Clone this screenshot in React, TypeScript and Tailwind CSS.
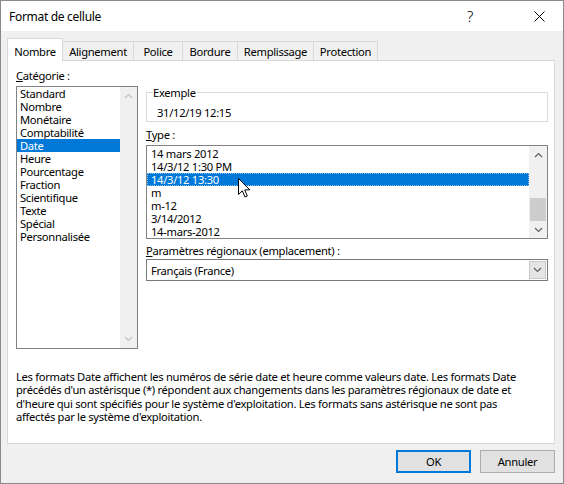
import React from "react";

const categories = [
  "Standard",
  "Nombre",
  "Monétaire",
  "Comptabilité",
  "Date",
  "Heure",
  "Pourcentage",
  "Fraction",
  "Scientifique",
  "Texte",
  "Spécial",
  "Personnalisée",
];

const types = [
  "14 mars 2012",
  "14/3/12 1:30 PM",
  "14/3/12 13:30",
  "m",
  "m-12",
  "3/14/2012",
  "14-mars-2012",
];

const tabs = [
  { label: "Nombre", w: "w-[56px]" },
  { label: "Alignement", w: "w-[72px]" },
  { label: "Police", w: "w-[50px]" },
  { label: "Bordure", w: "w-[56px]" },
  { label: "Remplissage", w: "w-[77px]" },
  { label: "Protection", w: "w-[65px]" },
];

const Chevron = ({ up, color }: { up?: boolean; color: string }) => (
  <svg width="9" height="6" viewBox="0 0 9 6">
    <polyline
      points={up ? "1,5 4.5,1.5 8,5" : "1,1 4.5,4.5 8,1"}
      fill="none"
      stroke={color}
      strokeWidth="1.2"
    />
  </svg>
);

const Cursor = () => (
  <svg width="13" height="20" viewBox="0 0 13 20">
    <path
      d="M0.5 0.5 V16.5 L4.3 12.8 L7 19 L9.3 18 L6.7 11.9 H11.8 Z"
      fill="#fff"
      stroke="#000"
      strokeWidth="1"
      strokeLinejoin="miter"
    />
  </svg>
);

export default function App() {
  return (
    <div className="w-[564px] h-[484px] border border-[#8a8a8a] bg-[#f0f0f0] text-[11.2px] tracking-[-0.3px] leading-[13px] text-black font-['Segoe_UI','Noto_Sans',sans-serif] flex flex-col overflow-hidden">
      {/* title bar */}
      <div className="h-[30px] bg-white flex items-center pl-[8px] shrink-0">
        <span className="flex-1 pt-[1px] text-[12px]">Format de cellule</span>
        <span className="w-[20px] text-center text-[15px] font-light mr-[54px]">?</span>
        <svg width="11" height="11" viewBox="0 0 11 11" className="mr-[18px]">
          <path d="M0.5 0.5 L10.5 10.5 M10.5 0.5 L0.5 10.5" stroke="#000" strokeWidth="1" />
        </svg>
      </div>

      <div className="pl-[6px] pt-[7px] flex flex-col">
        {/* tabs */}
        <div className="flex items-end h-[22px]">
          {tabs.map((t, i) =>
            i === 0 ? (
              <div
                key={t.label}
                className={`${t.w} h-[23px] -mb-px relative z-10 bg-white border border-b-0 border-[#d9d9d9] flex items-center justify-center pt-[2px]`}
              >
                {t.label}
              </div>
            ) : (
              <div
                key={t.label}
                className={`${t.w} h-[19px] -ml-px bg-[#f0f0f0] border border-b-0 border-[#d9d9d9] flex items-center justify-center`}
              >
                {t.label}
              </div>
            )
          )}
        </div>

        {/* panel */}
        <div className="w-[548px] h-[384px] bg-white border border-[#d9d9d9] pl-[8px] pt-[8px] flex flex-col">
          <div className="flex gap-[8px]">
            {/* categories */}
            <div className="w-[122px] flex flex-col">
              <div>
                <span className="underline">C</span>atégorie :
              </div>
              <div className="mt-[4px] h-[263px] border border-[#828282] flex">
                <div className="flex-1 flex flex-col">
                  {categories.map((c) => (
                    <div
                      key={c}
                      className={
                        c === "Date"
                          ? "h-[13px] pl-[3px] bg-[#0078d7] text-white"
                          : "h-[13px] pl-[3px]"
                      }
                    >
                      {c}
                    </div>
                  ))}
                </div>
                <div className="w-[17px] bg-[#f0f0f0] flex flex-col items-center justify-between py-[6px]">
                  <Chevron up color="#c2c2c2" />
                  <Chevron color="#c2c2c2" />
                </div>
              </div>
            </div>

            {/* right side */}
            <div className="w-[402px] pt-[17px] flex flex-col">
              <fieldset className="border border-[#dcdcdc] pl-[5px] pb-[2px]">
                <legend className="px-[1px]">Exemple</legend>
                <div className="pt-[7px] pl-[5px]">31/12/19 12:15</div>
              </fieldset>

              <div className="mt-[6px]">
                <span className="underline">T</span>ype :
              </div>
              <div className="mt-[4px] h-[94px] border border-[#828282] flex relative">
                <div className="flex-1 flex flex-col pt-[1px]">
                  {types.map((t) => (
                    <div
                      key={t}
                      className={
                        t === "14/3/12 13:30"
                          ? "h-[13px] pl-[4px] bg-[#0078d7] text-white outline outline-1 outline-dotted outline-[#8cbcea] -outline-offset-1"
                          : "h-[13px] pl-[4px]"
                      }
                    >
                      {t}
                    </div>
                  ))}
                </div>
                <div className="w-[18px] bg-[#f0f0f0] flex flex-col items-center">
                  <div className="h-[17px] flex items-center justify-center">
                    <Chevron up color="#606060" />
                  </div>
                  <div className="flex-1 w-full flex flex-col justify-end px-px">
                    <div className="h-[23px] bg-[#cdcdcd]" />
                  </div>
                  <div className="h-[17px] w-full flex items-center justify-center">
                    <Chevron color="#606060" />
                  </div>
                </div>
                <div className="absolute left-[91px] top-[32px]">
                  <Cursor />
                </div>
              </div>

              <div className="mt-[5px]">
                <span className="underline">P</span>aramètres régionaux (emplacement) :
              </div>
              <div className="mt-[2px] h-[22px] border border-[#7a7a7a] flex items-center">
                <div className="flex-1 pl-[4px]">Français (France)</div>
                <div className="w-[17px] h-[18px] mr-px bg-[#e5e5e5] border border-[#c8c8c8] flex items-center justify-center">
                  <Chevron color="#606060" />
                </div>
              </div>
            </div>
          </div>

          <p className="mt-[21px] leading-[13.4px] whitespace-nowrap">
            Les formats Date affichent les numéros de série date et heure comme valeurs date. Les formats Date
            <br />
            précédés d'un astérisque (*) répondent aux changements dans les paramètres régionaux de date et
            <br />
            d'heure qui sont spécifiés pour le système d'exploitation. Les formats sans astérisque ne sont pas
            <br />
            affectés par le système d'exploitation.
          </p>
        </div>

        {/* buttons */}
        <div className="w-[548px] mt-[6px] flex justify-end gap-[9px]">
          <button className="w-[75px] h-[23px] bg-[#e1e1e1] border-2 border-[#0078d7] flex items-center justify-center">
            OK
          </button>
          <button className="w-[75px] h-[23px] bg-[#e1e1e1] border border-[#adadad] flex items-center justify-center">
            Annuler
          </button>
        </div>
      </div>
    </div>
  );
}
